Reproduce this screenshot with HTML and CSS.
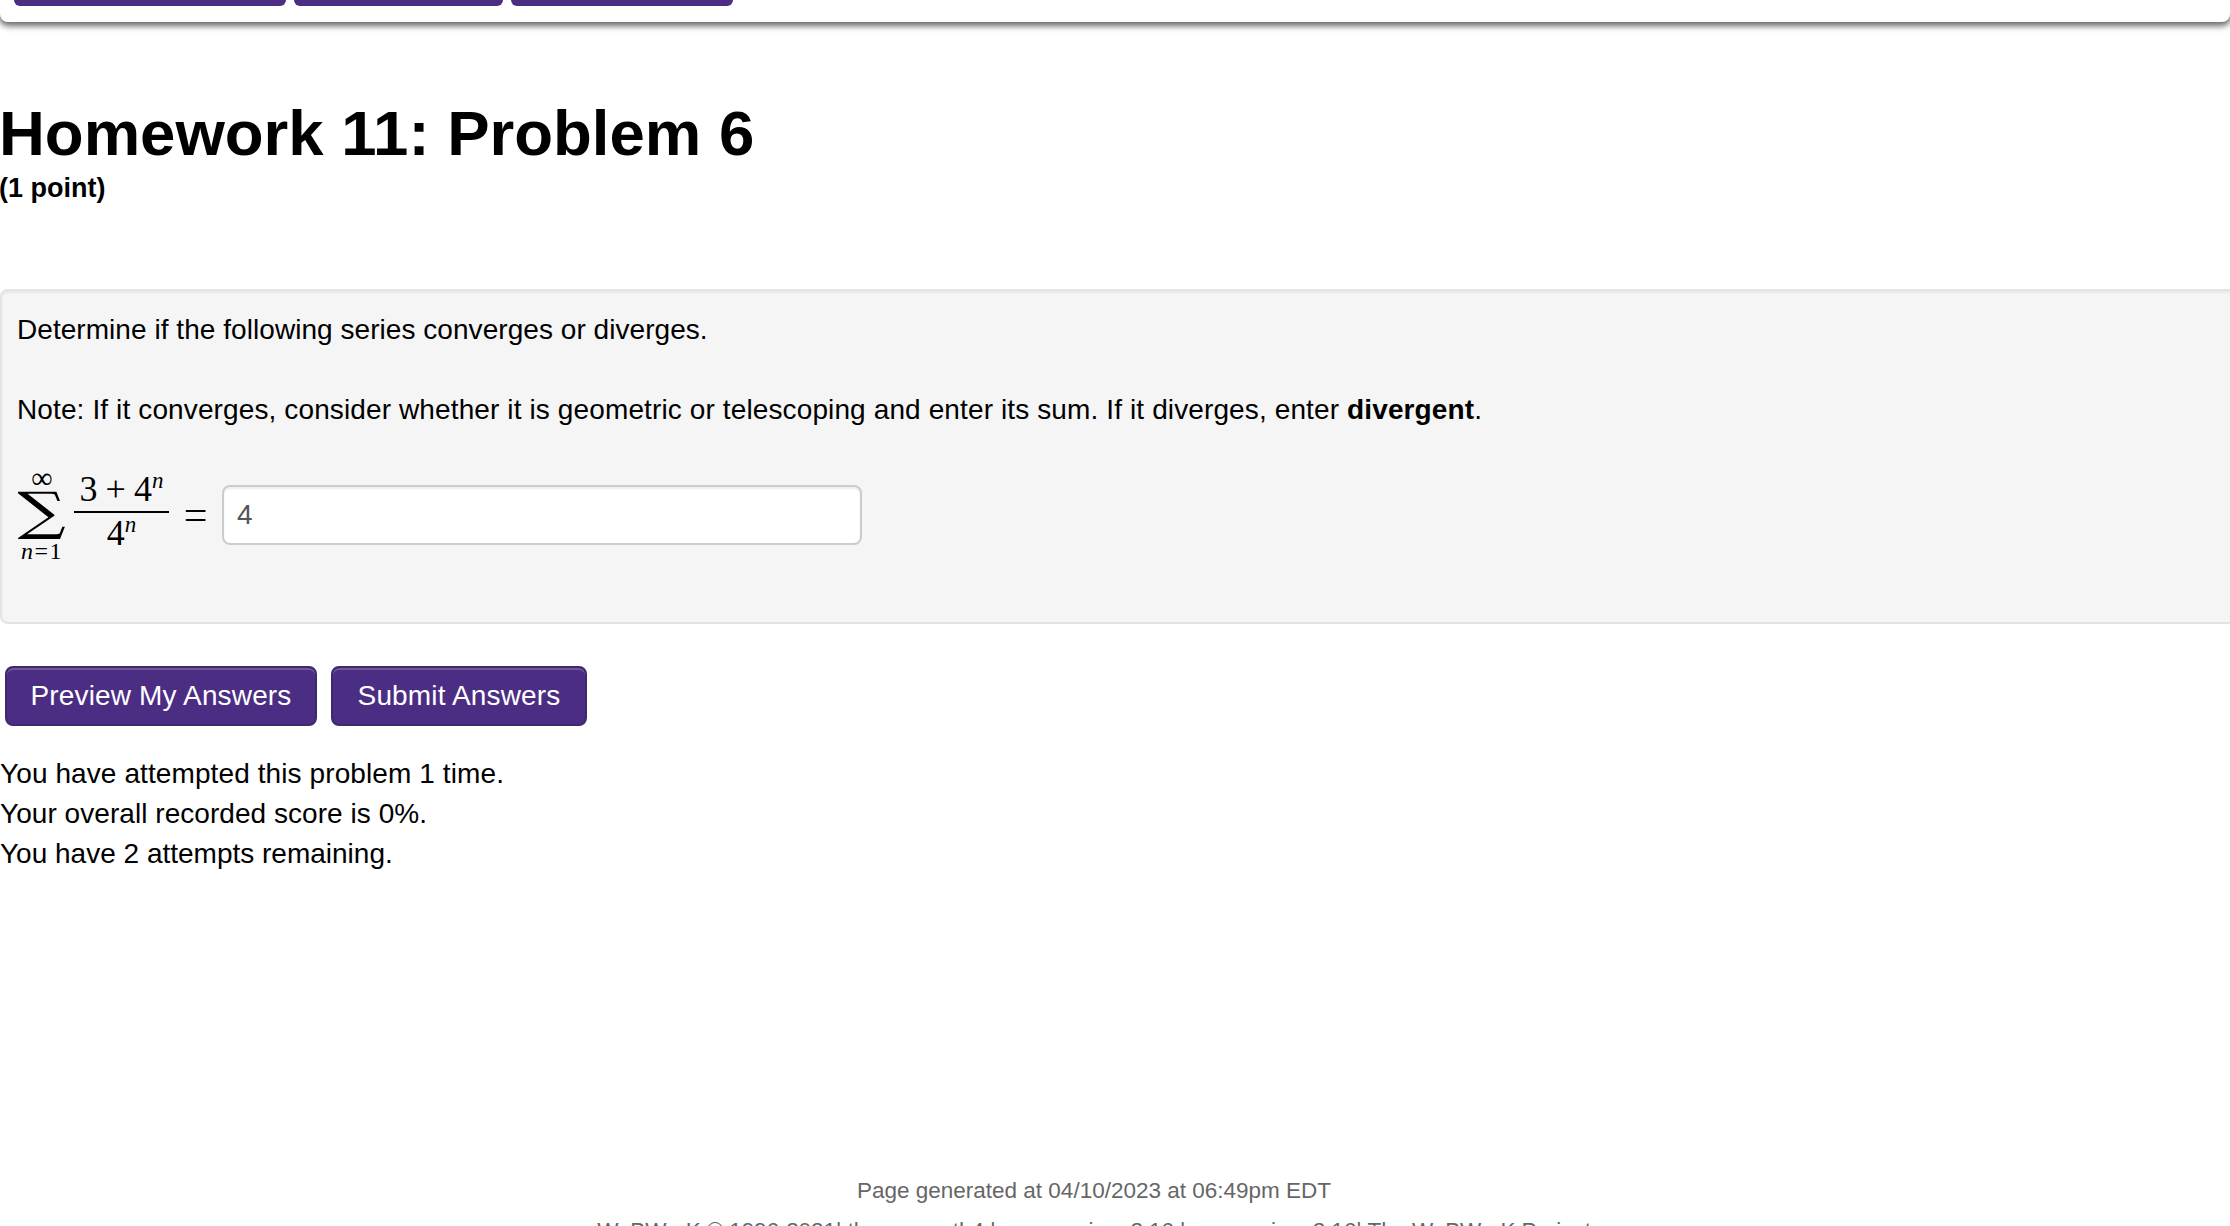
FILE: index.html
```html
<!DOCTYPE html>
<html lang="en">
<head>
<meta charset="utf-8">
<title>Homework 11: Problem 6</title>
<link rel="stylesheet" href="styles.css">
</head>
<body>
<nav class="topbar">
  <a class="tab tab-a"></a>
  <a class="tab tab-b"></a>
  <a class="tab tab-c"></a>
</nav>
<main class="main">
  <h1 class="title">Homework 11: Problem 6</h1>
  <h3 class="points">(1 point)</h3>
  <section class="well">
    <p class="line line-first">Determine if the following series converges or diverges.</p>
    <p class="line line-note">Note: If it converges, consider whether it is geometric or telescoping and enter its sum. If it diverges, enter <b>divergent</b>.</p>
    <div class="equation">
      <div class="sum">
        <span class="infinity">∞</span>
        <span class="sigma">∑</span>
        <span class="lower"><i>n</i>=1</span>
      </div>
      <div class="frac">
        <span class="num">3<span class="plus">+</span>4<sup><i>n</i></sup></span>
        <span class="den">4<sup><i>n</i></sup></span>
      </div>
      <span class="equals">=</span>
      <input class="answer" type="text" value="4">
    </div>
  </section>
  <div class="actions">
    <button class="btn btn-preview">Preview My Answers</button>
    <button class="btn btn-submit">Submit Answers</button>
  </div>
  <div class="status">
    <div class="status-a">You have attempted this problem 1 time.</div>
    <div class="status-b">Your overall recorded score is 0%.</div>
    <div>You have 2 attempts remaining.</div>
  </div>
</main>
<footer class="footer">
  <div>Page generated at 04/10/2023 at 06:49pm EDT</div>
  <div class="copyright">WeBWorK © 1996-2021| theme: math4 | ww_version: 2.16 | pg_version: 2.16| The WeBWorK Project</div>
</footer>
</body>
</html>
```
FILE: styles.css
```css
* { box-sizing: border-box; }
html, body { margin: 0; height: 1226px; overflow: hidden; background: #fff; }
body { font-family: "Liberation Sans", Arial, sans-serif; font-size: 28px; line-height: 40px; color: #000; display: flex; flex-direction: column; }

.topbar { height: 22px; flex: none; display: flex; gap: 8px; padding-left: 14px; background: #fff; border-radius: 0 0 8px 8px; box-shadow: 0 3px 6px 1px rgba(0,0,0,.6); position: relative; }
.tab { height: 6px; background: #4b2e83; border-radius: 0 0 8px 8px; display: block; }
.tab-a { width: 272px; }
.tab-b { width: 209px; }
.tab-c { width: 222px; }

.main { flex: none; height: 1149px; }
.title { margin: 76px 0 0 -1px; font-size: 63.5px; line-height: 70px; font-weight: 700; }
.points { margin: 0 0 0 -1px; font-size: 27px; line-height: 40px; font-weight: 700; }

.well { margin-top: 81px; height: 335px; padding: 19px 15px 0 15px; background: #f5f5f5; border: 2px solid #e3e3e3; border-right: 0; border-radius: 8px 0 0 8px; box-shadow: inset 0 2px 2px rgba(0,0,0,.05); }
.line { margin: 0; }
.line-first { letter-spacing: .05px; }
.line-note { margin-top: 40px; letter-spacing: .12px; }

.equation { display: flex; align-items: center; margin-top: 39px; height: 92px; font-family: "Liberation Serif", "DejaVu Serif", serif; }
.sum { width: 50px; display: flex; flex-direction: column; align-items: center; }
.infinity { font-size: 30px; line-height: 18px; }
.sigma { font-family: "DejaVu Serif", "Liberation Serif", serif; font-size: 52px; line-height: 48px; transform: scaleX(1.3); }
.lower { font-size: 24px; line-height: 20px; margin-top: 6px; letter-spacing: 1.5px; white-space: nowrap; }
.frac { width: 95px; margin-left: 7px; margin-bottom: 6px; display: flex; flex-direction: column; align-items: center; }
.num { font-size: 36px; line-height: 36px; border-bottom: 2px solid #000; width: 100%; text-align: center; padding-bottom: 4px; white-space: nowrap; }
.plus { margin: 0 8px; }
.den { font-size: 36px; line-height: 40px; }
sup { font-size: 23px; line-height: 0; }
.equals { font-size: 42px; width: 53px; text-align: center; }
.answer { width: 640px; height: 60px; padding: 0 13px; font: 28px "Liberation Sans", Arial, sans-serif; color: #555; background: #fff; border: 2px solid #ccc; border-radius: 8px; box-shadow: inset 0 2px 2px rgba(0,0,0,.075); }

.actions { display: flex; gap: 14px; margin-top: 42px; padding-left: 5px; }
.btn { height: 60px; padding: 0 20px; font: 28px "Liberation Sans", Arial, sans-serif; letter-spacing: .15px; color: #fff; background: #4b2e83; border: 2px solid #3b2a70; border-radius: 8px; box-shadow: inset 0 2px 0 rgba(255,255,255,.2); }
.btn-preview { width: 312px; }
.btn-submit { width: 256px; }

.status { margin-top: 28px; }
.status-a { letter-spacing: .1px; }
.status-b { letter-spacing: .05px; }

.footer { flex: none; width: 2188px; text-align: center; font-size: 22.5px; line-height: 40px; color: #666; white-space: nowrap; }
.copyright { letter-spacing: -.12px; }
```
